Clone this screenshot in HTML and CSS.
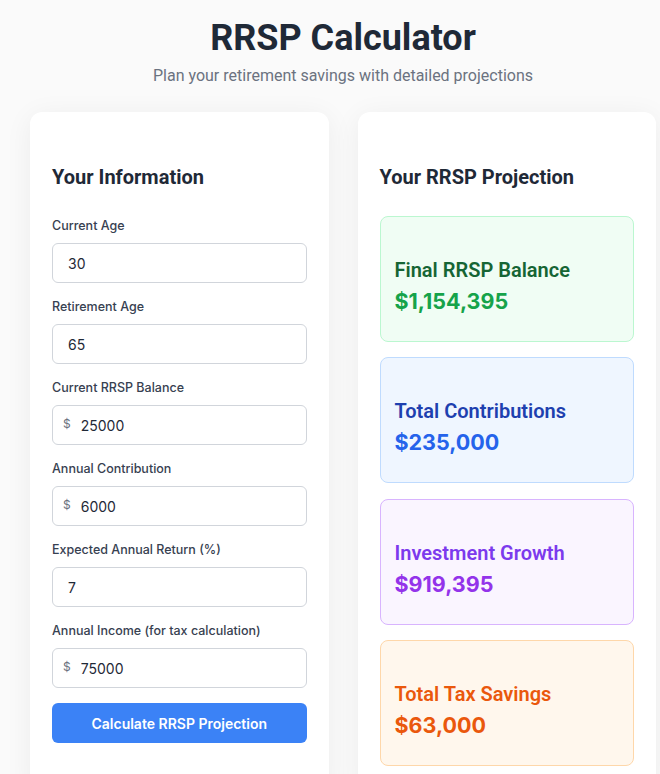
FILE: index.html
```html
<!DOCTYPE html>
<html lang="en">
<head>
  <meta charset="UTF-8" />
  <meta name="viewport" content="width=device-width, initial-scale=1.0" />
  <title>RRSP Calculator</title>
  <link rel="stylesheet" href="styles.css">
</head>
<body>
  <div class="page">
    <header class="header">
      <h1>RRSP Calculator</h1>
      <p class="subtitle">Plan your retirement savings with detailed projections</p>
    </header>

    <div class="columns">
      <section class="card">
        <h2>Your Information</h2>
        <div class="form">
          <label class="field">
            <span class="field-label">Current Age</span>
            <span class="input-wrap"><input type="number" value="30" /></span>
          </label>
          <label class="field">
            <span class="field-label">Retirement Age</span>
            <span class="input-wrap"><input type="number" value="65" /></span>
          </label>
          <label class="field">
            <span class="field-label">Current RRSP Balance</span>
            <span class="input-wrap money"><span class="prefix">$</span><input type="number" value="25000" /></span>
          </label>
          <label class="field">
            <span class="field-label">Annual Contribution</span>
            <span class="input-wrap money"><span class="prefix">$</span><input type="number" value="6000" /></span>
          </label>
          <label class="field">
            <span class="field-label">Expected Annual Return (%)</span>
            <span class="input-wrap"><input type="number" value="7" /></span>
          </label>
          <label class="field">
            <span class="field-label">Annual Income (for tax calculation)</span>
            <span class="input-wrap money"><span class="prefix">$</span><input type="number" value="75000" /></span>
          </label>
          <button class="calc-btn">Calculate RRSP Projection</button>
        </div>
      </section>

      <section class="card">
        <h2>Your RRSP Projection</h2>
        <div class="results">
          <div class="result green">
            <h3>Final RRSP Balance</h3>
            <p class="amount">$1,154,395</p>
          </div>
          <div class="result blue">
            <h3>Total Contributions</h3>
            <p class="amount">$235,000</p>
          </div>
          <div class="result purple">
            <h3>Investment Growth</h3>
            <p class="amount">$919,395</p>
          </div>
          <div class="result orange">
            <h3>Total Tax Savings</h3>
            <p class="amount">$63,000</p>
          </div>
        </div>
      </section>
    </div>
  </div>
</body>
</html>
```

FILE: styles.css
```css
* { box-sizing: border-box; }
body {
  margin: 0;
  background-color: #fafafa;
  color: #1f2937;
  font-family: Inter, "Noto Sans", sans-serif;
}
.page { width: 626px; margin-left: 30px; }

.header { text-align: center; padding-top: 16px; }
.header h1 {
  margin: 0;
  font-family: Roboto, sans-serif;
  font-size: 36px;
  line-height: 44px;
  font-weight: 700;
  color: #1f2937;
}
.subtitle {
  margin: 4px 0 0;
  font-family: Roboto, sans-serif;
  font-size: 16px;
  line-height: 24px;
  color: #6b7280;
}

.columns {
  display: grid;
  grid-template-columns: 1fr 1fr;
  gap: 29px;
  margin-top: 24px;
}
.card {
  background: #fff;
  border-radius: 12px;
  box-shadow: 0 4px 28px rgba(0, 0, 0, 0.06);
  padding: 22px 22px 30px;
}
.card h2 {
  margin: 29px 0 25px;
  font-family: Roboto, sans-serif;
  font-size: 20px;
  line-height: 28px;
  font-weight: 700;
  color: #1f2937;
}

.form { display: flex; flex-direction: column; gap: 14px; }
.field { display: flex; flex-direction: column; gap: 7px; }
.field-label {
  font-size: 12.5px;
  line-height: 20px;
  font-weight: 500;
  color: #374151;
}
.input-wrap {
  display: flex;
  align-items: center;
  height: 40px;
  border: 1px solid #d1d5db;
  border-radius: 6px;
  padding: 0 15px;
  background: #fff;
}
.input-wrap input {
  border: none;
  outline: none;
  width: 100%;
  padding: 0;
  font-family: Inter, sans-serif;
  font-size: 14px;
  color: #1f2937;
  background: transparent;
  -moz-appearance: textfield;
}
.input-wrap input::-webkit-inner-spin-button { -webkit-appearance: none; }
.money { padding-left: 10px; }
.prefix {
  font-size: 12px;
  color: #6b7280;
  margin-right: 10px;
  position: relative;
  top: -2px;
}

.calc-btn {
  margin-top: 1px;
  height: 40px;
  border: none;
  border-radius: 6px;
  background-color: #3b82f6;
  color: #fff;
  font-family: Inter, sans-serif;
  font-size: 14px;
  font-weight: 600;
  cursor: pointer;
}

.results { display: flex; flex-direction: column; gap: 15.33px; margin-top: 4px; }
.result {
  height: 126px;
  border: 1px solid;
  border-radius: 8px;
  padding: 40px 15px 0 14px;
}
.result h3 {
  margin: 0;
  font-family: Roboto, sans-serif;
  font-size: 20px;
  line-height: 26px;
  font-weight: 600;
}
.amount {
  margin: 4px 0 0;
  font-size: 21.5px;
  line-height: 28px;
  font-weight: 700;
}
.green { background: #f0fdf4; border-color: #bbf7d0; }
.green h3 { color: #166534; }
.green .amount { color: #16a34a; }
.blue { background: #eff6ff; border-color: #bfdbfe; }
.blue h3 { color: #1e40af; }
.blue .amount { color: #2563eb; }
.purple { background: #faf5ff; border-color: #d8b4fe; }
.purple h3 { color: #7c3aed; }
.purple .amount { color: #9333ea; }
.orange { background: #fff7ed; border-color: #fed7aa; }
.orange h3 { color: #ea580c; }
.orange .amount { color: #ea580c; }
```
